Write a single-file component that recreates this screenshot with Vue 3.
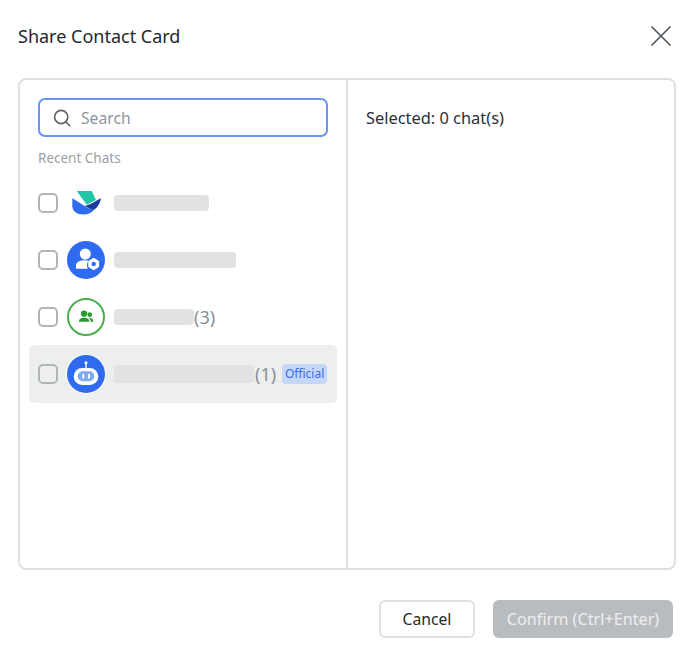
<script setup>
const barWidths = { a: 95, b: 122, c: 80, d: 140 }
</script>

<template>
  <div class="dialog">
    <header class="head">
      <h1 class="title">Share Contact Card</h1>
      <svg class="close" width="22" height="22" viewBox="0 0 22 22" fill="none" stroke="#4e5359" stroke-width="1.6">
        <path d="M1.500 1.500 L20.500 20.500 M20.500 1.500 L1.500 20.500" />
      </svg>
    </header>

    <section class="panel">
      <div class="left">
        <div class="search">
          <svg width="20" height="20" viewBox="0 0 20 20" fill="none" stroke="#5d6269" stroke-width="1.6">
            <circle cx="9.200" cy="9" r="6.600" />
            <path d="M14 14 L17.600 17.600" stroke-linecap="round" />
          </svg>
          <span class="placeholder">Search</span>
        </div>
        <div class="label">Recent Chats</div>

        <ul class="list">
          <li class="row">
            <span class="check"></span>
            <span class="avatar">
              <svg width="38" height="38" viewBox="0 0 38 38">
                <path d="M9.700 7 H24.700 L29 16 L19.700 20.800 Z" fill="#1fc6a8" />
                <path d="M5.300 14.300 L21.300 24.300 L27.500 25.500 C25 28.500 21 30.500 16.500 30.500 C10 30.500 5.300 27 5.300 22 Z" fill="#2f6bf0" />
                <path d="M34 14.300 C33 19 31 23 27.500 25.500 C24 25.500 21 24 17.500 21.700 C23 21.500 28 17 34 14.300 Z" fill="#1a3a9c" />
              </svg>
            </span>
            <span class="bar" :style="{ width: barWidths.a + 'px' }"></span>
          </li>

          <li class="row">
            <span class="check"></span>
            <span class="avatar blue">
              <svg width="38" height="38" viewBox="0 0 38 38">
                <circle cx="18.300" cy="13" r="5.500" fill="#fff" />
                <path d="M9 27.700 V24.500 C9 21 13 19.300 18 19.300 C19.500 19.300 20.500 19.500 21.500 19.800 C19.800 22 19.500 25.500 20.800 27.700 Z" fill="#fff" />
                <path d="M26.700 17.300 L31.600 20.150 V25.850 L26.700 28.700 L21.800 25.850 V20.150 Z" fill="#fff" stroke="#fff" stroke-linejoin="round" />
                <circle cx="26.700" cy="23" r="2.200" fill="#2f6bf0" />
              </svg>
            </span>
            <span class="bar" :style="{ width: barWidths.b + 'px' }"></span>
          </li>

          <li class="row">
            <span class="check"></span>
            <span class="avatar outline">
              <svg width="36" height="36" viewBox="0 0 36 36" fill="#2a9a2f">
                <circle cx="16" cy="14.500" r="3.300" />
                <path d="M10.500 23 C10.500 20 12.800 18.800 16 18.800 C19.200 18.800 21.500 20 21.500 23 Z" />
                <circle cx="22" cy="15.500" r="2.500" />
                <path d="M20.500 18.800 C23.500 18.600 25.800 20 25.800 23 H23 C23 21.200 22 19.800 20.500 18.800 Z" />
              </svg>
            </span>
            <span class="bar" :style="{ width: barWidths.c + 'px' }"></span>
            <span class="count">(3)</span>
          </li>

          <li class="row active">
            <span class="check"></span>
            <span class="avatar blue ring">
              <svg width="38" height="38" viewBox="0 0 38 38">
                <circle cx="19" cy="7.800" r="1.500" fill="#fff" />
                <path d="M18.300 8 H19.700 V13.500 H18.300 Z" fill="#fff" />
                <rect x="6.700" y="13" width="24.600" height="17" rx="8.500" fill="#fff" />
                <rect x="10.700" y="16.300" width="16.600" height="10" rx="5" fill="#7fa8f5" />
                <rect x="15.300" y="18.800" width="2" height="5" rx="1" fill="#fff" />
                <rect x="21" y="18.800" width="2" height="5" rx="1" fill="#fff" />
              </svg>
            </span>
            <span class="bar tall" :style="{ width: barWidths.d + 'px' }"></span>
            <span class="count after">(1)</span>
            <span class="tag">Official</span>
          </li>
        </ul>
      </div>

      <div class="right">
        <p class="selected">Selected: 0 chat(s)</p>
      </div>
    </section>

    <footer class="foot">
      <button class="btn cancel">Cancel</button>
      <button class="btn confirm">Confirm (Ctrl+Enter)</button>
    </footer>
  </div>
</template>

<style>
html, body { margin: 0; background: #fff; }
</style>

<style scoped>
.dialog {
  width: 693px;
  height: 663px;
  box-sizing: border-box;
  padding: 0 17px 0 18px;
  background: #fff;
  font-family: "Noto Sans", "Open Sans", sans-serif;
  color: #1f2329;
  display: flex;
  flex-direction: column;
}
.head {
  height: 78px;
  display: flex;
  align-items: center;
  justify-content: space-between;
  padding-bottom: 6px;
  box-sizing: border-box;
}
.title {
  margin: 0;
  font-size: 18px;
  font-weight: 400;
  line-height: 24px;
  color: #24282e;
}
.close { margin-right: 4px; }
.panel {
  width: 658px;
  height: 492px;
  box-sizing: border-box;
  border: 2px solid #dee0e3;
  border-radius: 8px;
  display: flex;
}
.left {
  width: 328px;
  box-sizing: border-box;
  border-right: 2px solid #dee0e3;
  padding: 18px 9px 0 9px;
}
.search {
  margin: 0 0 0 9px;
  width: 290px;
  height: 39px;
  box-sizing: border-box;
  border: 2px solid #6a95f5;
  border-radius: 7px;
  display: flex;
  align-items: center;
  padding-left: 12px;
  gap: 9px;
}
.placeholder {
  font-size: 15.700px;
  color: #8f959e;
}
.label {
  margin: 11px 0 0 9px;
  font-size: 13.500px;
  line-height: 20px;
  color: #9a9fa6;
}
.list {
  list-style: none;
  margin: 6px 0 0;
  padding: 0;
}
.row {
  height: 57px;
  display: flex;
  align-items: center;
  padding-left: 9px;
  border-radius: 5px;
}
.row.active {
  background: #edeeee;
  height: 58px;
}
.check {
  width: 20px;
  height: 20px;
  box-sizing: border-box;
  border: 2px solid #b1b5ba;
  border-radius: 5px;
  background: #fff;
  flex: none;
}
.row.active .check { background: transparent; }
.avatar {
  width: 38px;
  height: 38px;
  margin: 0 9px;
  border-radius: 50%;
  flex: none;
  display: flex;
  align-items: center;
  justify-content: center;
}
.avatar.blue { background: #2f6bf0; }
.avatar.ring { box-shadow: 0 0 0 1px rgba(255, 255, 255, 0.7); }
.avatar.outline {
  box-sizing: border-box;
  border: 2px solid #4aae4e;
}
.bar {
  height: 16px;
  background: #e2e2e2;
  border-radius: 4px;
  flex: none;
}
.bar.tall { height: 18px; }
.count {
  font-size: 18px;
  color: #8a8f96;
  line-height: 22px;
}
.count.after { margin-left: 1px; }
.tag {
  margin-left: 6px;
  width: 45px;
  height: 20px;
  border-radius: 4px;
  background: #c6d6f8;
  color: #3a6ae8;
  font-size: 12px;
  line-height: 20px;
  text-align: center;
}
.right {
  flex: 1;
  padding: 26px 18px 0;
}
.selected {
  margin: 0;
  font-size: 16.400px;
  line-height: 24px;
  color: #2b2f36;
}
.foot {
  display: flex;
  justify-content: flex-end;
  gap: 18px;
  margin-top: 30px;
  padding-right: 3px;
}
.btn {
  height: 38px;
  box-sizing: border-box;
  border-radius: 6px;
  font-family: inherit;
  padding: 0;
}
.cancel {
  width: 96px;
  background: #fff;
  border: 2px solid #dee0e3;
  color: #26292e;
  font-size: 15.700px;
}
.confirm {
  width: 180px;
  background: #b9bcbf;
  border: none;
  color: #edeeef;
  font-size: 16.200px;
}
</style>
